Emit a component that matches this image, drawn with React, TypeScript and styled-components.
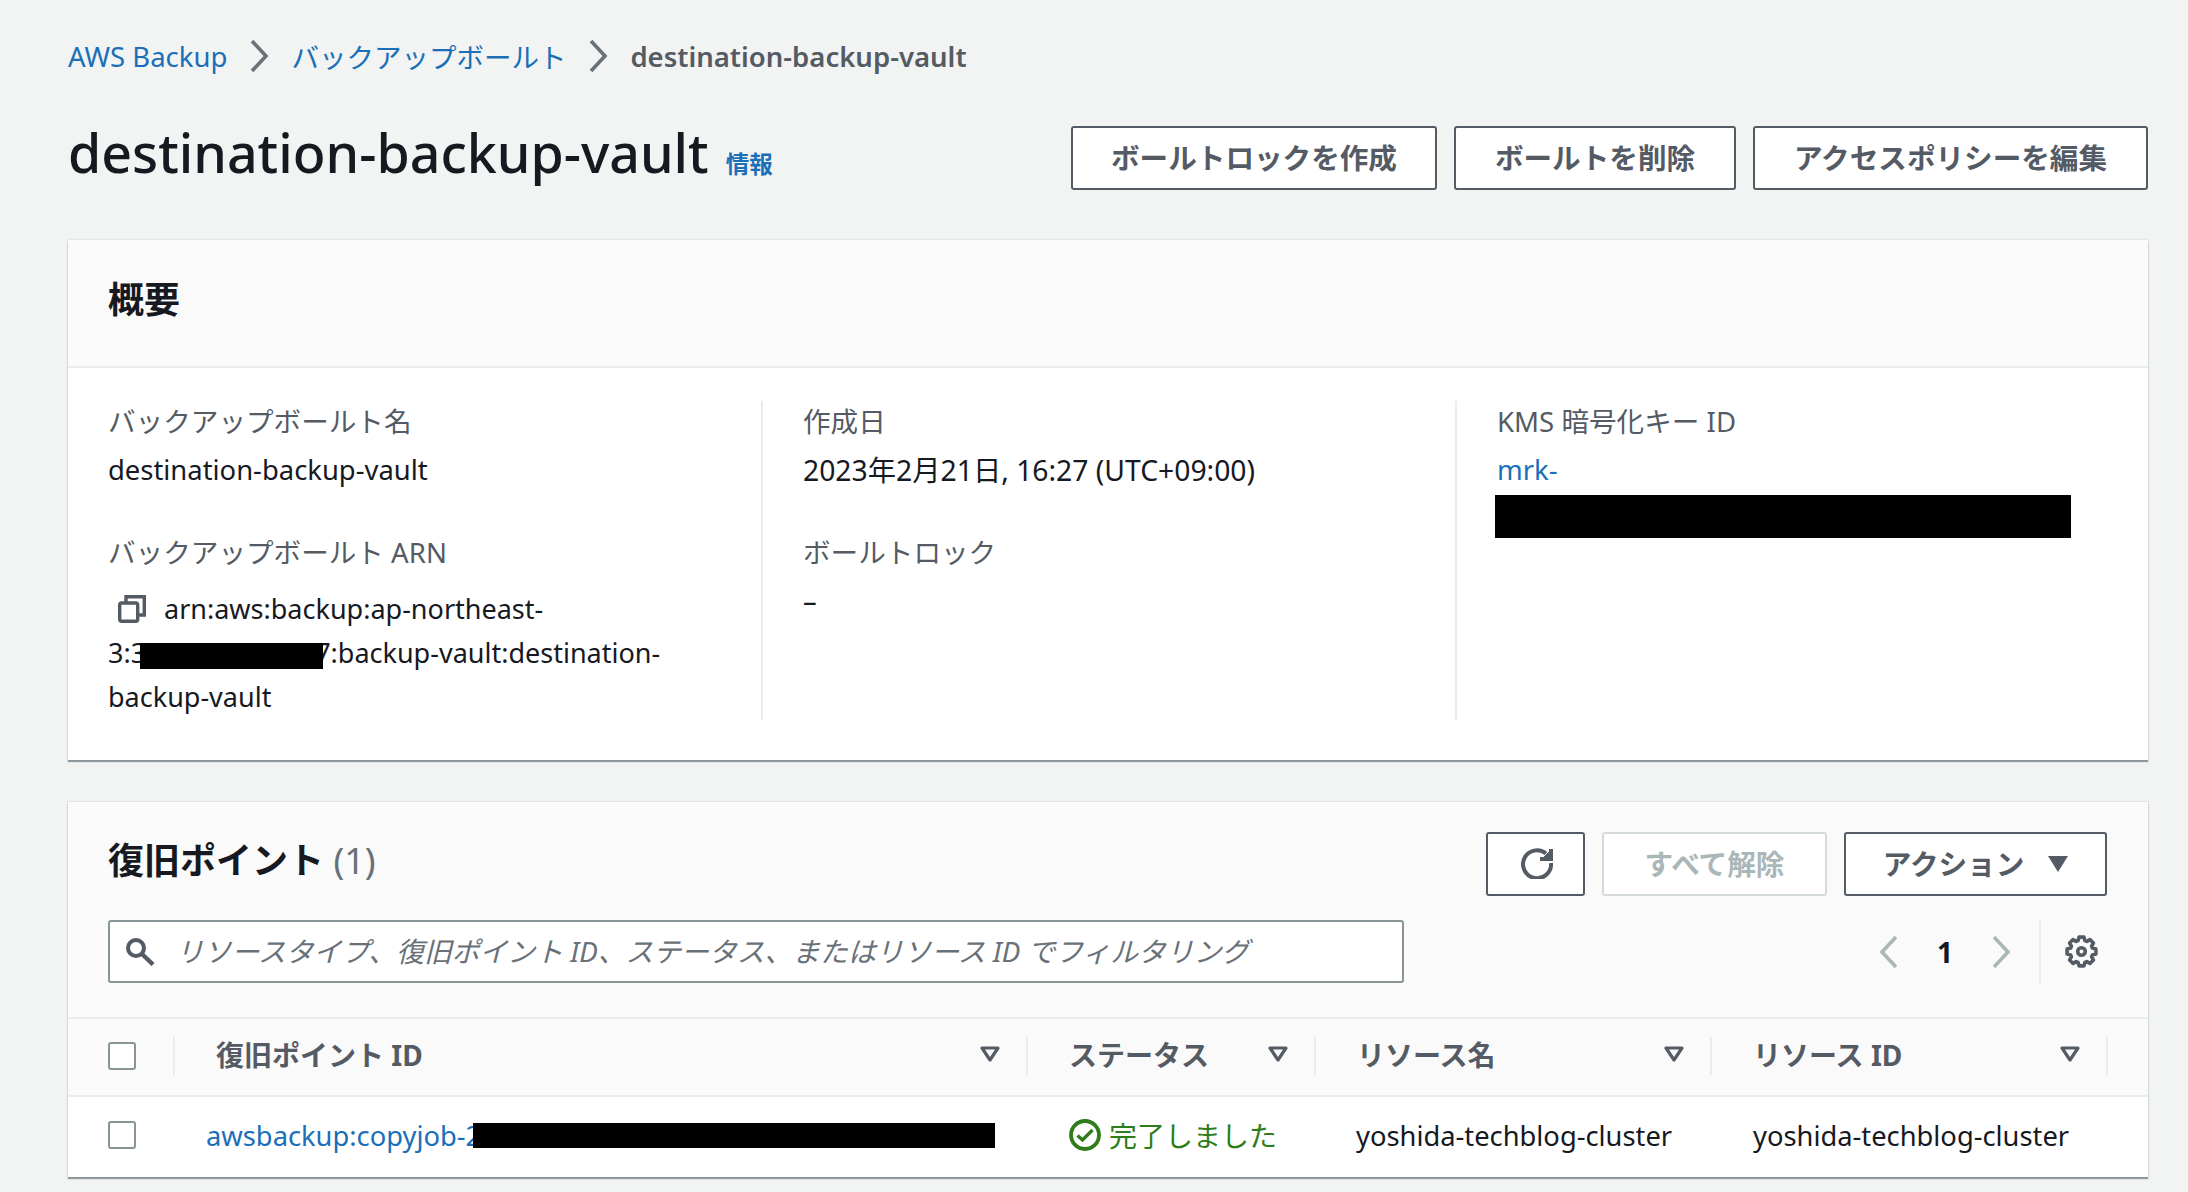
import { FC } from "react";
import styled, { createGlobalStyle } from "styled-components";

const LINK = "#1a6fb8";
const GREEN = "#2e7d1a";

const GlobalStyle = createGlobalStyle`
  html, body {
    margin: 0;
    padding: 0;
    background: #f2f3f3;
  }
  body {
    width: 2188px;
    height: 1192px;
    overflow: hidden;
    font-family: "Noto Sans", "Noto Sans CJK JP", sans-serif;
    color: #16191f;
  }
`;

const ChevronRight: FC<{ color?: string }> = ({ color = "#687078" }) => (
  <svg width="20" height="32" viewBox="0 0 20 32" fill="none">
    <path d="M3 1l14 15L3 31" stroke={color} strokeWidth="3.6" />
  </svg>
);

const ChevronLeft: FC<{ color?: string }> = ({ color = "#aab7b8" }) => (
  <svg width="20" height="32" viewBox="0 0 20 32" fill="none">
    <path d="M17 1L3 16l14 15" stroke={color} strokeWidth="3.6" />
  </svg>
);

const SortIcon = () => (
  <svg width="20" height="16" viewBox="0 0 20 16" fill="none">
    <path d="M2 2h16l-8 12z" stroke="#545b64" strokeWidth="3.2" strokeLinejoin="round" />
  </svg>
);

// 8 teeth, drawn as one outline around the centre
const gearPath = () => {
  const pts: string[] = [];
  for (let i = 0; i < 8; i++) {
    const a = (i * Math.PI) / 4;
    const at = (r: number, d: number) => {
      const x = 16.5 + r * Math.sin(a + d);
      const y = 16.5 - r * Math.cos(a + d);
      return `${x.toFixed(2)} ${y.toFixed(2)}`;
    };
    pts.push(at(11.4, -0.3), at(14.6, -0.17), at(14.6, 0.17), at(11.4, 0.3));
  }
  return `M${pts.join("L")}Z`;
};

const GearIcon = () => (
  <svg width="33" height="33" viewBox="0 0 33 33" fill="none" stroke="#545b64" strokeWidth="3.6" strokeLinejoin="round">
    <path d={gearPath()} />
    <circle cx="16.5" cy="16.5" r="3.8" />
  </svg>
);

const Page = styled.div`
  display: flex;
  flex-direction: column;
  padding: 38px 40px 0 68px;
`;

const Breadcrumbs = styled.nav`
  display: flex;
  align-items: center;
  height: 36px;
  gap: 22px;
  font-size: 27.5px;
`;

const Crumb = styled.a<{ $current?: boolean }>`
  color: ${(p) => (p.$current ? "#545b64" : LINK)};
  font-weight: ${(p) => (p.$current ? 600 : 400)};
  white-space: nowrap;
`;

const PageHeader = styled.header`
  display: flex;
  align-items: center;
  justify-content: space-between;
  margin-top: 52px;
  height: 64px;
`;

const TitleGroup = styled.div`
  display: flex;
  align-items: baseline;
  gap: 17px;
  padding-bottom: 10px;
`;

const PageTitle = styled.h1`
  margin: 0;
  font-size: 53.7px;
  font-weight: 500;
  line-height: 64px;
`;

const InfoLink = styled.a`
  color: ${LINK};
  font-size: 23.5px;
  font-weight: 700;
`;

const ButtonRow = styled.div`
  display: flex;
  gap: 17px;
`;

const Button = styled.button<{ $w: number; $disabled?: boolean }>`
  display: flex;
  align-items: center;
  justify-content: center;
  gap: 24px;
  width: ${(p) => p.$w}px;
  height: 64px;
  padding: 0 0 4px;
  background: #fff;
  border: 2px solid ${(p) => (p.$disabled ? "#d5dbdb" : "#545b64")};
  border-radius: 3px;
  color: ${(p) => (p.$disabled ? "#aab7b8" : "#545b64")};
  font-family: inherit;
  font-size: 28.6px;
  font-weight: 700;
  white-space: nowrap;
`;

const IconButton = styled(Button)`
  padding: 0 0 2px 2px;
`;

const Card = styled.section`
  width: 2080px;
  background: #fff;
  box-shadow: 0 2px 1px rgba(0, 28, 36, 0.4), 0 0 2px rgba(0, 28, 36, 0.18);
`;

const OverviewCard = styled(Card)`
  margin-top: 50px;
  height: 520px;
`;

const CardTitleBar = styled.div`
  display: flex;
  align-items: center;
  height: 128px;
  padding: 0 0 12px 40px;
  background: #fafafa;
  border-bottom: 2px solid #eaeded;
  font-size: 36px;
  font-weight: 700;
  box-sizing: border-box;
`;

const Columns = styled.div`
  display: grid;
  grid-template-columns: 695px 694px 1fr;
  padding-top: 33px;
`;

const Column = styled.div<{ $last?: boolean }>`
  height: 319px;
  padding: 0 40px;
  border-right: ${(p) => (p.$last ? "none" : "2px solid #eaeded")};
  box-sizing: border-box;
  min-width: 0;
`;

const Field = styled.div`
  margin-bottom: 40px;
`;

const FieldLabel = styled.div`
  color: #545b64;
  font-size: 27.6px;
  line-height: 40px;
  margin-bottom: 7px;
`;

const FieldValue = styled.div<{ $size?: number }>`
  font-size: ${(p) => p.$size ?? 27.4}px;
  line-height: 44px;
  width: 570px;
  white-space: nowrap;
`;

const ArnValue = styled(FieldValue)`
  margin-top: 15px;
  font-size: 27px;
`;

const ArnLine = styled.div`
  display: flex;
  align-items: center;
  gap: 18px;
  padding-left: 10px;
`;

const Redaction = styled.span<{ $w: number; $h: number; $pull?: number; $overlap?: number }>`
  display: inline-block;
  position: relative;
  width: ${(p) => p.$w}px;
  height: ${(p) => p.$h}px;
  margin-left: ${(p) => -(p.$pull ?? 0)}px;
  margin-right: ${(p) => -(p.$overlap ?? 0)}px;
  background: #000;
  vertical-align: middle;
  z-index: 1;
`;

const KmsLink = styled.a`
  display: block;
  color: ${LINK};
  font-size: 27.5px;
  line-height: 44px;
`;

const KmsRedaction = styled(Redaction)`
  display: block;
  margin: 3px 0 0 -2px;
`;

const ResourceCard = styled(Card)`
  margin-top: 42px;
  height: 375px;
`;

const ResourceHead = styled.div`
  height: 215px;
  padding: 30px 41px 0 40px;
  background: #fafafa;
  box-sizing: border-box;
`;

const HeadTop = styled.div`
  display: flex;
  align-items: center;
  justify-content: space-between;
  height: 64px;
`;

const SectionTitle = styled.h2`
  margin: 0 0 12px;
  font-size: 36px;
  font-weight: 700;
`;

const Count = styled.span`
  color: #687078;
  font-weight: 400;
`;

const Tools = styled.div`
  display: flex;
  gap: 17px;
`;

const Caret = styled.span`
  width: 0;
  height: 0;
  margin-top: 4px;
  border-left: 10px solid transparent;
  border-right: 10px solid transparent;
  border-top: 16px solid #545b64;
`;

const FilterRow = styled.div`
  display: flex;
  align-items: center;
  justify-content: space-between;
  margin-top: 24px;
`;

const SearchBox = styled.label`
  display: flex;
  align-items: center;
  gap: 20px;
  width: 1296px;
  height: 63px;
  padding-left: 16px;
  background: #fff;
  border: 2px solid #879596;
  border-radius: 3px;
  box-sizing: border-box;
`;

const SearchInput = styled.input`
  flex: 1;
  border: 0;
  outline: 0;
  padding: 0 0 2px;
  background: transparent;
  font-family: inherit;
  font-size: 27.8px;
  font-style: italic;
  &::placeholder {
    color: #687078;
    opacity: 1;
  }
`;

const Pager = styled.div`
  display: flex;
  align-items: center;
  height: 63px;
`;

const PageNumber = styled.span`
  width: 92px;
  text-align: center;
  font-size: 28px;
  font-weight: 700;
`;

const PagerEdge = styled.div`
  display: flex;
  align-items: center;
  height: 63px;
  margin-left: 28px;
  padding-left: 24px;
  padding-right: 9px;
  border-left: 2px solid #eaeded;
`;

const TableGrid = styled.div<{ $head?: boolean }>`
  display: grid;
  grid-template-columns: 107px 853px 288px 396px 396px 40px;
  height: ${(p) => (p.$head ? 78 : 82)}px;
  background: ${(p) => (p.$head ? "#fafafa" : "#fff")};
  border-top: 2px solid #eaeded;
  box-sizing: border-box;
`;

const HeadCell = styled.div<{ $first?: boolean }>`
  display: flex;
  align-items: center;
  justify-content: space-between;
  height: 38px;
  margin-top: 18px;
  padding: 0 ${(p) => (p.$first ? 37 : 26)}px ${(p) => (p.$first ? 0 : 4)}px ${(p) => (p.$first ? 40 : 41)}px;
  border-right: 2px solid #eaeded;
  color: #545b64;
  font-size: 28px;
  font-weight: 700;
  white-space: nowrap;
  box-sizing: border-box;
`;

const BodyCell = styled.div<{ $inset: number }>`
  display: flex;
  align-items: center;
  padding-left: ${(p) => p.$inset}px;
  padding-bottom: 4px;
  font-size: 27.3px;
  white-space: nowrap;
`;

const Checkbox = styled.span`
  display: block;
  width: 28px;
  height: 28px;
  background: #fff;
  border: 2px solid #879596;
  border-radius: 3px;
  box-sizing: border-box;
`;

const RowLink = styled.a`
  color: ${LINK};
`;

const Status = styled.span`
  display: flex;
  align-items: center;
  gap: 8px;
  color: ${GREEN};
  font-size: 28px;
`;

const columnHeads = ["復旧ポイント ID", "ステータス", "リソース名", "リソース ID"];

const App = () => {
  return (
    <>
      <GlobalStyle />
      <Page>
        <Breadcrumbs>
          <Crumb>AWS Backup</Crumb>
          <ChevronRight />
          <Crumb>バックアップボールト</Crumb>
          <ChevronRight />
          <Crumb $current>destination-backup-vault</Crumb>
        </Breadcrumbs>

        <PageHeader>
          <TitleGroup>
            <PageTitle>destination-backup-vault</PageTitle>
            <InfoLink>情報</InfoLink>
          </TitleGroup>
          <ButtonRow>
            <Button $w={366}>ボールトロックを作成</Button>
            <Button $w={282}>ボールトを削除</Button>
            <Button $w={395}>アクセスポリシーを編集</Button>
          </ButtonRow>
        </PageHeader>

        <OverviewCard>
          <CardTitleBar>概要</CardTitleBar>
          <Columns>
            <Column>
              <Field>
                <FieldLabel>バックアップボールト名</FieldLabel>
                <FieldValue>destination-backup-vault</FieldValue>
              </Field>
              <Field>
                <FieldLabel>バックアップボールト ARN</FieldLabel>
                <ArnValue>
                  <ArnLine>
                    <svg width="28" height="28" viewBox="0 0 28 28" fill="none" stroke="#545b64" strokeWidth="3.4">
                      <rect x="1.7" y="8" width="18" height="18.3" rx="2" />
                      <path d="M8 7V1.7h18.3V20H21" />
                    </svg>
                    arn:aws:backup:ap-northeast-
                  </ArnLine>
                  <div>
                    3:3
                    <Redaction $w={183} $h={26} $pull={6} $overlap={8} />
                    7:backup-vault:destination-
                  </div>
                  <div>backup-vault</div>
                </ArnValue>
              </Field>
            </Column>
            <Column>
              <Field>
                <FieldLabel>作成日</FieldLabel>
                <FieldValue $size={28.3}>2023年2月21日, 16:27 (UTC+09:00)</FieldValue>
              </Field>
              <Field>
                <FieldLabel>ボールトロック</FieldLabel>
                <FieldValue>–</FieldValue>
              </Field>
            </Column>
            <Column $last>
              <Field>
                <FieldLabel>KMS 暗号化キー ID</FieldLabel>
                <KmsLink>mrk-</KmsLink>
                <KmsRedaction $w={576} $h={43} />
              </Field>
            </Column>
          </Columns>
        </OverviewCard>

        <ResourceCard>
          <ResourceHead>
            <HeadTop>
              <SectionTitle>
                復旧ポイント <Count>(1)</Count>
              </SectionTitle>
              <Tools>
                <IconButton $w={99}>
                  <svg width="32" height="32" viewBox="0 0 32 32" fill="none" stroke="#545b64" strokeWidth="4">
                    <path d="M25 6.5A14 14 0 1 0 30 16" />
                    <path d="M30 2v10H19" />
                    <path d="M29 4v7h-7z" fill="#545b64" strokeWidth="1" />
                  </svg>
                </IconButton>
                <Button $w={225} $disabled>
                  すべて解除
                </Button>
                <Button $w={263}>
                  アクション
                  <Caret />
                </Button>
              </Tools>
            </HeadTop>
            <FilterRow>
              <SearchBox>
                <svg width="30" height="28" viewBox="0 0 30 28" fill="none" stroke="#545b64" strokeWidth="4">
                  <circle cx="10" cy="10" r="8" />
                  <path d="M15.5 15.5L27 26.5" strokeWidth="4.4" />
                </svg>
                <SearchInput placeholder="リソースタイプ、復旧ポイント ID、ステータス、またはリソース ID でフィルタリング" />
              </SearchBox>
              <Pager>
                <ChevronLeft />
                <PageNumber>1</PageNumber>
                <ChevronRight color="#aab7b8" />
                <PagerEdge>
                  <GearIcon />
                </PagerEdge>
              </Pager>
            </FilterRow>
          </ResourceHead>

          <TableGrid $head>
            <HeadCell $first>
              <Checkbox />
            </HeadCell>
            {columnHeads.map((label) => (
              <HeadCell key={label}>
                {label}
                <SortIcon />
              </HeadCell>
            ))}
          </TableGrid>

          <TableGrid>
            <BodyCell $inset={40}>
              <Checkbox />
            </BodyCell>
            <BodyCell $inset={31}>
              <RowLink>awsbackup:copyjob-2</RowLink>
              <Redaction $w={522} $h={25} $pull={8} />
            </BodyCell>
            <BodyCell $inset={41}>
              <Status>
                <svg width="32" height="32" viewBox="0 0 32 32" fill="none" stroke={GREEN} strokeWidth="3.8">
                  <circle cx="16" cy="16" r="14" />
                  <path d="M8.5 16.5l5 4.5 10-10" strokeWidth="3.4" />
                </svg>
                完了しました
              </Status>
            </BodyCell>
            <BodyCell $inset={40}>yoshida-techblog-cluster</BodyCell>
            <BodyCell $inset={41}>yoshida-techblog-cluster</BodyCell>
            <BodyCell $inset={0} />
          </TableGrid>
        </ResourceCard>
      </Page>
    </>
  );
};

export default App;
